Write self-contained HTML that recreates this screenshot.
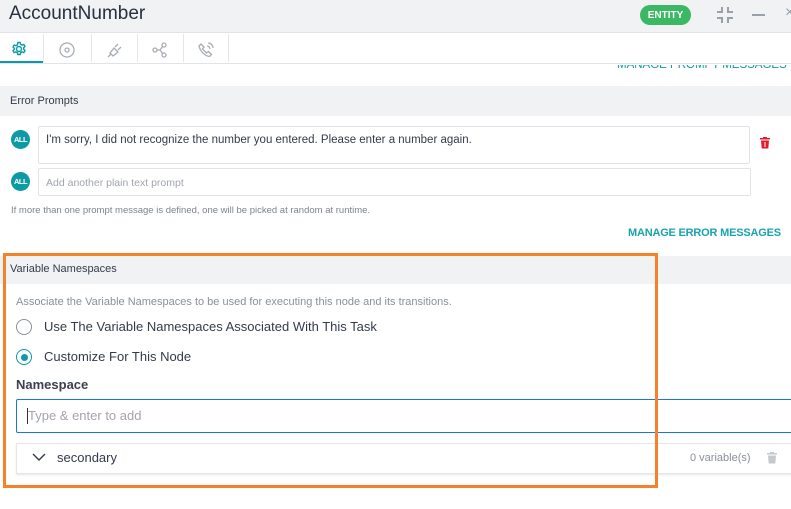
<!DOCTYPE html>
<html><head><style>
*{box-sizing:border-box;margin:0;padding:0}
body{width:791px;height:509px;overflow:hidden;background:#fff;font-family:"Liberation Sans",sans-serif;position:relative;color:#333b4a}
.abs{position:absolute;white-space:nowrap}
.all{position:absolute;width:19px;height:19px;border-radius:50%;background:#0d9aa5;color:#fff;font-size:7.5px;font-weight:bold;text-align:center;line-height:19px;letter-spacing:-0.5px}
.box{position:absolute;border:1px solid #e1e3e8;border-radius:2px;background:#fff}
</style></head><body>
<div class="abs" style="left:0;top:0;width:791px;height:33px;background:#f1f2f4;border-bottom:1px solid #e1e3e8"></div>
<div class="abs" style="left:9px;top:3px;font-size:19px;color:#263040">AccountNumber</div>
<div class="abs" style="left:640px;top:5px;width:51px;height:20px;border-radius:10px;background:#3bb864;color:#fff;font-size:10px;font-weight:bold;text-align:center;line-height:21px">ENTITY</div>
<svg class="abs" style="left:716px;top:6px" width="18" height="18" viewBox="0 0 18 18" fill="none" stroke="#9aa0aa" stroke-width="2"><path d="M6 1v5H1M12 1v5h5M6 17v-5H1M12 17v-5h5"/></svg>
<div class="abs" style="left:752px;top:14px;width:13px;height:2px;background:#9aa0aa"></div>
<div class="abs" style="left:785px;top:4px;font-size:16px;color:#9aa0aa">×</div>
<div class="abs" style="left:0;top:33px;width:791px;height:31px;border-bottom:1px solid #e1e3e8"></div>
<div class="abs" style="left:0;top:61px;width:43px;height:2px;background:#0d9aa5"></div>
<div class="abs" style="left:43px;top:34px;width:1px;height:28px;background:#e4e6ea"></div>
<div class="abs" style="left:91px;top:34px;width:1px;height:28px;background:#e4e6ea"></div>
<div class="abs" style="left:137px;top:34px;width:1px;height:28px;background:#e4e6ea"></div>
<div class="abs" style="left:183px;top:34px;width:1px;height:28px;background:#e4e6ea"></div>
<div class="abs" style="left:228px;top:34px;width:1px;height:28px;background:#e4e6ea"></div>
<svg class="abs" style="left:11px;top:41px" width="16" height="16" viewBox="0 0 16 16" fill="none" stroke="#0d9aa5" stroke-width="1.4"><circle cx="8" cy="8" r="2.5"/><path d="M6.8 1.5h2.4l.4 1.8 1.5.8 1.7-.7 1.2 2-1.3 1.3v1.6l1.3 1.3-1.2 2-1.7-.7-1.5.8-.4 1.8H6.8l-.4-1.8-1.5-.8-1.7.7-1.2-2 1.3-1.3V7.3L2 6l1.2-2 1.7.7 1.5-.8z"/></svg>
<svg class="abs" style="left:59px;top:42px" width="16" height="16" viewBox="0 0 16 16" fill="none" stroke="#a8adb5" stroke-width="1.3"><circle cx="8" cy="8" r="7"/><circle cx="8" cy="8" r="2"/></svg>
<svg class="abs" style="left:106px;top:42px" width="17" height="16" viewBox="0 0 17 16" fill="none" stroke="#a8adb5" stroke-width="1.3"><path d="M2 15l3-3M5 12l-1-1 4-5 4 4-5 4zM9 5l3-3M12 8l3-3"/></svg>
<svg class="abs" style="left:152px;top:42px" width="16" height="16" viewBox="0 0 16 16" fill="none" stroke="#a8adb5" stroke-width="1.3"><circle cx="3" cy="8" r="2"/><circle cx="12" cy="3" r="2"/><circle cx="12" cy="13" r="2"/><path d="M5 8h3l3-4M8 8l3 4"/></svg>
<svg class="abs" style="left:198px;top:42px" width="16" height="16" viewBox="0 0 16 16" fill="none" stroke="#a8adb5" stroke-width="1.3"><path d="M3 2l3 3-1.5 2 4 4 2-1.5 3 3-2 2C7 14 2 9 1 4z"/><path d="M9 4a3 3 0 013 3M10 1a5 5 0 015 5"/></svg>
<div class="abs" style="left:617px;top:65px;font-size:11.5px;color:#0d9aa5;height:6px;overflow:hidden;width:170px"><div style="margin-top:-6px">MANAGE PROMPT MESSAGES</div></div>
<div class="abs" style="left:0;top:86px;width:791px;height:30px;background:#f1f2f4"></div>
<div class="abs" style="left:10px;top:95px;font-size:11px;color:#333b4a">Error Prompts</div>
<div class="all" style="left:11px;top:130px">ALL</div>
<div class="box" style="left:38px;top:126px;width:712px;height:38px"></div>
<div class="abs" style="left:46px;top:134px;font-size:11.5px;color:#333b4a">I'm sorry, I did not recognize the number you entered. Please enter a number again.</div>
<svg class="abs" style="left:760px;top:137px" width="10" height="12" viewBox="0 0 10 12"><rect x="0" y="1" width="10" height="1.5" fill="#e8192c"/><rect x="3" y="0" width="4" height="1.5" fill="#e8192c"/><path d="M1 3.5h8l-.7 8H1.7z" fill="#e8192c"/><rect x="4" y="5" width="2" height="5" fill="#ff8a94"/></svg>
<div class="all" style="left:11px;top:172px">ALL</div>
<div class="box" style="left:38px;top:168px;width:713px;height:28px"></div>
<div class="abs" style="left:46px;top:177px;font-size:10.5px;color:#a0a5ad">Add another plain text prompt</div>
<div class="abs" style="left:11px;top:205px;font-size:9.5px;color:#7d838c">If more than one prompt message is defined, one will be picked at random at runtime.</div>
<div class="abs" style="left:628px;top:227px;font-size:11px;font-weight:bold;color:#1aa3ad;letter-spacing:-0.2px">MANAGE ERROR MESSAGES</div>
<div class="abs" style="left:0;top:256px;width:791px;height:28px;background:#f1f2f4"></div>
<div class="abs" style="left:10px;top:263px;font-size:11px;color:#333b4a">Variable Namespaces</div>
<div class="abs" style="left:16px;top:296px;font-size:11px;color:#8a9099">Associate the Variable Namespaces to be used for executing this node and its transitions.</div>
<div class="abs" style="left:16px;top:319px;width:16px;height:16px;border-radius:50%;border:1.3px solid #8a9099"></div>
<div class="abs" style="left:44px;top:319px;font-size:13px;color:#333b4a">Use The Variable Namespaces Associated With This Task</div>
<div class="abs" style="left:16px;top:349px;width:16px;height:16px;border-radius:50%;border:1.3px solid #0d9aa5"></div>
<div class="abs" style="left:20.5px;top:353.5px;width:7px;height:7px;border-radius:50%;background:#0d9aa5"></div>
<div class="abs" style="left:44px;top:349px;font-size:13px;color:#333b4a">Customize For This Node</div>
<div class="abs" style="left:16px;top:377px;font-size:13px;font-weight:bold;color:#3a4250">Namespace</div>
<div class="abs" style="left:16px;top:399px;width:790px;height:34px;border:1px solid #1a73e8;border-radius:2px"></div>
<div class="abs" style="left:27px;top:408px;width:1px;height:16px;background:#333"></div>
<div class="abs" style="left:28px;top:408px;font-size:13px;color:#a0a5ad">Type &amp; enter to add</div>
<div class="abs" style="left:16px;top:443px;width:790px;height:31px;border:1px solid #e4e6ea;box-shadow:0 1px 2px rgba(0,0,0,.1)"></div>
<svg class="abs" style="left:32px;top:453px" width="14" height="9" viewBox="0 0 14 9" fill="none" stroke="#333b4a" stroke-width="1.4"><path d="M1 1l6 6 6-6"/></svg>
<div class="abs" style="left:57px;top:450px;font-size:13px;color:#333b4a">secondary</div>
<div class="abs" style="left:690px;top:452px;font-size:11px;color:#8a9099">0 variable(s)</div>
<svg class="abs" style="left:767px;top:452px" width="10" height="12" viewBox="0 0 10 12"><rect x="0" y="1" width="10" height="1.5" fill="#c5c8cd"/><rect x="3" y="0" width="4" height="1.5" fill="#c5c8cd"/><path d="M1 3.5h8l-.7 8H1.7z" fill="#c5c8cd"/></svg>
<div class="abs" style="left:3px;top:253px;width:655px;height:235px;border:3px solid #f5822a"></div>
</body></html>
